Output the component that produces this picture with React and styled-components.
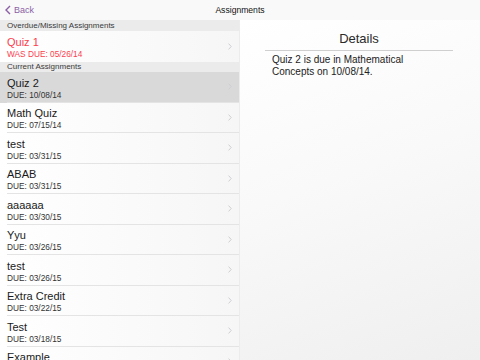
import React from 'react';
import styled, { createGlobalStyle } from 'styled-components';

const GlobalStyle = createGlobalStyle`
  html, body {
    margin: 0;
    padding: 0;
    background: #fff;
  }
  body {
    font-family: 'Liberation Sans', Arial, sans-serif;
    -webkit-font-smoothing: antialiased;
  }
`;

const Screen = styled.div`
  width: 480px;
  height: 360px;
  overflow: hidden;
  display: flex;
  flex-direction: column;
  background: #fff;
`;

const NavBar = styled.div`
  height: 20px;
  flex-shrink: 0;
  display: grid;
  grid-template-columns: 1fr auto 1fr;
  align-items: center;
  background: #f9f9f9;
`;

const BackButton = styled.div`
  display: flex;
  align-items: center;
  gap: 3px;
  padding-left: 5px;
  color: #8b5fa6;
  font-size: 9px;
`;

const NavTitle = styled.div`
  font-size: 8.6px;
  color: #111;
`;

const Body = styled.div`
  flex: 1;
  display: flex;
  min-height: 0;
`;

const ListPane = styled.div`
  width: 240px;
  flex-shrink: 0;
  border-right: 1px solid #ececec;
  box-sizing: border-box;
  display: flex;
  flex-direction: column;
  background: linear-gradient(to right, #ffffff, #f6f6f6);
`;

const SectionHeader = styled.div`
  height: ${(p) => p.$h || 11}px;
  flex-shrink: 0;
  display: flex;
  align-items: center;
  padding-left: 7px;
  font-size: 8px;
  color: #3a3a3a;
  background: #ebebeb;
`;

const Row = styled.div`
  height: 30.5px;
  flex-shrink: 0;
  display: flex;
  padding-left: 7px;
  background: ${(p) => (p.$selected ? '#d9d9d9' : 'transparent')};
`;

const RowInner = styled.div`
  flex: 1;
  display: flex;
  align-items: center;
  justify-content: space-between;
  padding-right: 7px;
  border-bottom: ${(p) => (p.$last ? 'none' : '1px solid #e4e4e4')};
`;

const RowText = styled.div`
  display: flex;
  flex-direction: column;
  padding-top: 2px;
`;

const RowTitle = styled.div`
  font-size: 11px;
  line-height: 14px;
  color: ${(p) => (p.$overdue ? '#fc3d4f' : '#1a1a1a')};
`;

const RowSub = styled.div`
  font-size: 8.3px;
  line-height: 10px;
  color: ${(p) => (p.$overdue ? '#fc3d4f' : '#333')};
`;

const DetailPane = styled.div`
  flex: 1;
  padding: 11px 27px 0 25px;
  background: linear-gradient(160deg, #ffffff 0%, #f9f9f9 45%, #efefef 100%);
`;

const DetailTitle = styled.div`
  text-align: center;
  font-size: 13px;
  color: #2a2a2a;
  line-height: 16px;
  padding-bottom: 3px;
  border-bottom: 1.5px solid #cfcfcf;
`;

const DetailText = styled.p`
  margin: 3px 0 0 7px;
  font-size: 10px;
  line-height: 11.5px;
  color: #222;
`;

const Chevron = ({ color = '#cfcfd3' }) => (
  <svg width="4" height="7" viewBox="0 0 4 7">
    <polyline points="0.6,0.6 3.2,3.5 0.6,6.4" fill="none" stroke={color} strokeWidth="1" />
  </svg>
);

const BackChevron = () => (
  <svg width="6" height="10" viewBox="0 0 6 10">
    <polyline points="5,1 1,5 5,9" fill="none" stroke="#8b5fa6" strokeWidth="1.4" />
  </svg>
);

const overdue = [{ title: 'Quiz 1', due: 'WAS DUE: 05/26/14' }];

const current = [
  { title: 'Quiz 2', due: 'DUE: 10/08/14', selected: true },
  { title: 'Math Quiz', due: 'DUE: 07/15/14' },
  { title: 'test', due: 'DUE: 03/31/15' },
  { title: 'ABAB', due: 'DUE: 03/31/15' },
  { title: 'aaaaaa', due: 'DUE: 03/30/15' },
  { title: 'Yyu', due: 'DUE: 03/26/15' },
  { title: 'test', due: 'DUE: 03/26/15' },
  { title: 'Extra Credit', due: 'DUE: 03/22/15' },
  { title: 'Test', due: 'DUE: 03/18/15' },
  { title: 'Example', due: 'DUE: 03/18/15' },
];

function AssignmentRow({ item, overdue: isOverdue, last }) {
  return (
    <Row $selected={item.selected}>
      <RowInner $last={last}>
        <RowText>
          <RowTitle $overdue={isOverdue}>{item.title}</RowTitle>
          <RowSub $overdue={isOverdue}>{item.due}</RowSub>
        </RowText>
        <Chevron />
      </RowInner>
    </Row>
  );
}

export default function App() {
  return (
    <>
      <GlobalStyle />
      <Screen>
        <NavBar>
          <BackButton>
            <BackChevron />
            Back
          </BackButton>
          <NavTitle>Assignments</NavTitle>
          <div />
        </NavBar>
        <Body>
          <ListPane>
            <SectionHeader>Overdue/Missing Assignments</SectionHeader>
            {overdue.map((a, i) => (
              <AssignmentRow key={i} item={a} overdue last />
            ))}
            <SectionHeader $h={10.5}>Current Assignments</SectionHeader>
            {current.map((a, i) => (
              <AssignmentRow key={i} item={a} />
            ))}
          </ListPane>
          <DetailPane>
            <DetailTitle>Details</DetailTitle>
            <DetailText>
              Quiz 2 is due in Mathematical
              <br />
              Concepts on 10/08/14.
            </DetailText>
          </DetailPane>
        </Body>
      </Screen>
    </>
  );
}
